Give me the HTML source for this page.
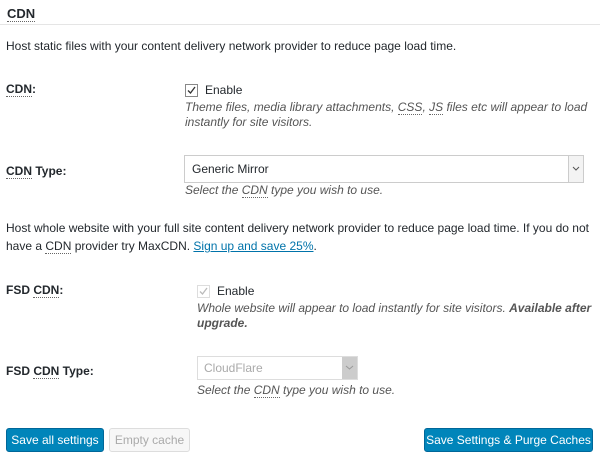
<!DOCTYPE html>
<html><head><style>
body{margin:0;width:600px;height:468px;background:#fff;font-family:"Liberation Sans",sans-serif;font-size:12px;color:#23282d;position:relative;overflow:hidden}
.a{position:absolute;white-space:nowrap}
abbr{text-decoration:none;border-bottom:1px dotted #666}
i{color:#555}
.cb{position:absolute;width:11px;height:11px;border:1px solid #888;background:#fff}
.sel{position:absolute;border:1px solid #ddd;background:#fff;box-sizing:border-box}
.btn{position:absolute;box-sizing:border-box;border-radius:3px;height:24px;line-height:22px;text-align:center;font-size:12px}
.p{background:#0085ba;border:1px solid #006799;color:#fff}
</style></head><body>
<div class="a" style="left:7px;top:6px;font-size:13px;font-weight:bold"><abbr>CDN</abbr></div>
<div style="position:absolute;left:0;top:24px;width:600px;height:1px;background:#e5e5e5"></div>
<div class="a" style="left:6px;top:39px">Host static files with your content delivery network provider to reduce page load time.</div>
<div class="a" style="left:6px;top:82px;font-weight:bold"><abbr>CDN</abbr>:</div>
<div class="cb" style="left:185px;top:84px"><svg width="11" height="11" style="position:absolute;left:0;top:0"><path d="M2 5.5l2.5 2.5 4.5-6" fill="none" stroke="#333" stroke-width="1.3"/></svg></div>
<div class="a" style="left:205px;top:83px">Enable</div>
<div class="a" style="left:185px;top:100px"><i>Theme files, media library attachments, <abbr>CSS</abbr>, <abbr>JS</abbr> files etc will appear to load</i></div>
<div class="a" style="left:185px;top:115px"><i>instantly for site visitors.</i></div>
<div class="a" style="left:6px;top:164px;font-weight:bold"><abbr>CDN</abbr> Type:</div>
<div class="sel" style="left:184px;top:155px;width:400px;height:28px;border-color:#ccc"><span class="a" style="left:7px;top:6px">Generic Mirror</span><span style="position:absolute;right:0;top:0;width:14px;height:26px;border-left:1px solid #ccc;background:#f3f3f3"><svg width="14" height="26"><path d="M4 11l3 3 3-3" fill="none" stroke="#555"/></svg></span></div>
<div class="a" style="left:185px;top:183px"><i>Select the <abbr>CDN</abbr> type you wish to use.</i></div>
<div class="a" style="left:6px;top:221px">Host whole website with your full site content delivery network provider to reduce page load time. If you do not</div>
<div class="a" style="left:6px;top:239px">have a <abbr>CDN</abbr> provider try MaxCDN. <span style="color:#0073aa;text-decoration:underline">Sign up and save 25%</span>.</div>
<div class="a" style="left:6px;top:283px;font-weight:bold">FSD <abbr>CDN</abbr>:</div>
<div class="cb" style="left:197px;top:285px;border-color:#ddd"><svg width="11" height="11" style="position:absolute;left:0;top:0"><path d="M2 5.5l2.5 2.5 4.5-6" fill="none" stroke="#bbb" stroke-width="1.3"/></svg></div>
<div class="a" style="left:217px;top:284px">Enable</div>
<div class="a" style="left:197px;top:301px"><i>Whole website will appear to load instantly for site visitors. <b>Available after</b></i></div>
<div class="a" style="left:197px;top:316px"><i><b>upgrade.</b></i></div>
<div class="a" style="left:6px;top:364px;font-weight:bold">FSD <abbr>CDN</abbr> Type:</div>
<div class="sel" style="left:197px;top:356px;width:161px;height:24px"><span class="a" style="left:6px;top:4px;color:#aaa">CloudFlare</span><span style="position:absolute;right:0;top:0;width:15px;height:22px;background:#ccc"><svg width="15" height="22"><path d="M4 9l3.5 3 3.5-3" fill="none" stroke="#999"/></svg></span></div>
<div class="a" style="left:197px;top:383px"><i>Select the <abbr>CDN</abbr> type you wish to use.</i></div>
<div class="btn p" style="left:6px;top:428px;width:98px">Save all settings</div>
<div class="btn" style="left:109px;top:428px;width:81px;border:1px solid #ddd;color:#aaa;background:#f7f7f7">Empty cache</div>
<div class="btn p" style="left:424px;top:428px;width:169px">Save Settings &amp; Purge Caches</div>
</body></html>
